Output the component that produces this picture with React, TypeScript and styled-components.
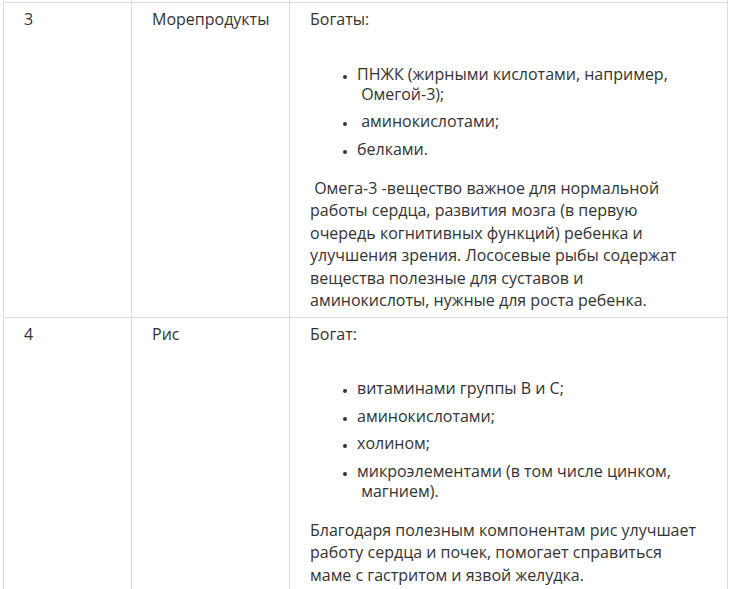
import React, { FC } from "react";
import styled, { createGlobalStyle } from "styled-components";

const GlobalStyle = createGlobalStyle`
  html, body {
    margin: 0;
    padding: 0;
    background: #ffffff;
  }
  body {
    font-family: "Open Sans", "Noto Sans", sans-serif;
    font-size: 16px;
    color: #333333;
  }
`;

interface FoodRow {
  num: string;
  name: string;
  intro: string;
  items: string[];
  note: string;
}

const rows: FoodRow[] = [
  {
    num: "3",
    name: "Морепродукты",
    intro: "Богаты:",
    items: [
      "ПНЖК (жирными кислотами, например, \u00a0Омегой-3);",
      "\u00a0аминокислотами;",
      "белками.",
    ],
    note:
      "\u00a0Омега-3 -вещество важное для нормальной работы сердца, развития мозга (в первую очередь когнитивных функций) ребенка и улучшения зрения. Лососевые рыбы содержат вещества полезные для суставов и аминокислоты, нужные для роста ребенка.",
  },
  {
    num: "4",
    name: "Рис",
    intro: "Богат:",
    items: [
      "витаминами группы В и С;",
      "аминокислотами;",
      "холином;",
      "микроэлементами (в том числе цинком, \u00a0магнием).",
    ],
    note:
      "Благодаря полезным компонентам рис улучшает работу сердца и почек, помогает справиться маме с гастритом и язвой желудка.",
  },
];

export default function App() {
  return (
    <>
      <GlobalStyle />
      <Page>
        <Table>
          <colgroup>
            <col style={{ width: 128 }} />
            <col style={{ width: 158 }} />
            <col style={{ width: 438 }} />
          </colgroup>
          <tbody>
            <TailRow>
              <td />
              <td />
              <td />
            </TailRow>
            {rows.map(row => (
              <TableRow key={row.num} row={row} />
            ))}
          </tbody>
        </Table>
      </Page>
    </>
  );
}

const TableRow: FC<{ row: FoodRow }> = ({ row }) => (
  <tr>
    <Cell>{row.num}</Cell>
    <Cell>{row.name}</Cell>
    <TextCell>
      <Intro>{row.intro}</Intro>
      <List>
        {row.items.map(item => (
          <Item key={item}>{item}</Item>
        ))}
      </List>
      <Note>{row.note}</Note>
    </TextCell>
  </tr>
);

const Page = styled.div`
  padding: 0 0 0 3px;
  overflow: hidden;
`;

const Table = styled.table`
  width: 724px;
  table-layout: fixed;
  border-collapse: collapse;
  margin-top: -1px;
`;

// the bottom of the previous row, cut off by the screenshot
const TailRow = styled.tr`
  td {
    height: 3px;
    padding: 0;
    border: 1px solid #dddddd;
    border-top: none;
  }
`;

const Cell = styled.td`
  vertical-align: top;
  padding: 5px 20px 5px 20px;
  border: 1px solid #dddddd;
  line-height: 22.5px;
`;

const TextCell = styled(Cell)`
  padding-right: 27px;
`;

const Intro = styled.p`
  margin: 0;
`;

const List = styled.ul`
  margin: 33px 0 18px;
  padding-left: 47px;
  list-style: disc;
`;

const Item = styled.li`
  line-height: 20px;
  & + & {
    margin-top: 7.5px;
  }
  &::marker {
    font-size: 10px;
  }
`;

const Note = styled.p`
  margin: 0;
`;
